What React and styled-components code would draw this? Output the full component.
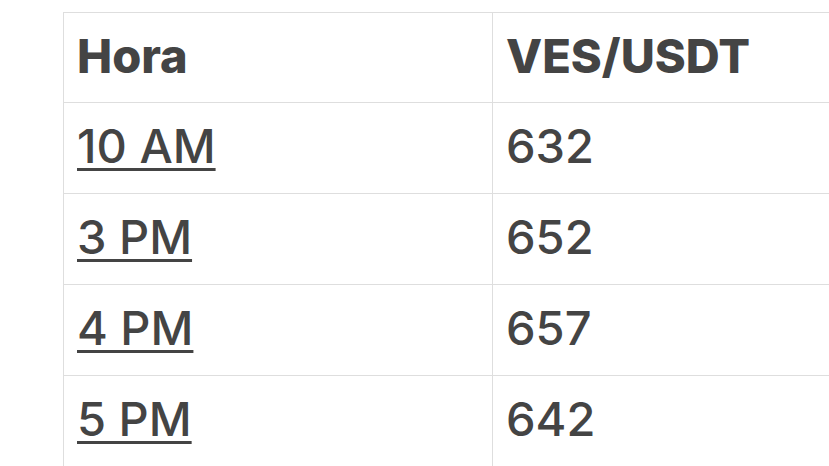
import React from "react";
import styled, { createGlobalStyle } from "styled-components";

const GlobalStyle = createGlobalStyle`
  html, body {
    margin: 0;
    overflow: hidden;
  }
  body {
    background: #fff;
    font-family: Inter, "Noto Sans", sans-serif;
    color: #444;
  }
`;

const Page = styled.div`
  width: 100%;
  overflow: hidden;
  padding: 12px 0 0 63px;
  box-sizing: border-box;
`;

const Table = styled.table`
  border-collapse: collapse;
  width: 900px;
  table-layout: fixed;
`;

const Col = styled.col`
  width: ${(p) => p.$w}px;
`;

const HeadCell = styled.th`
  text-align: left;
  font-weight: 800;
  font-size: 47px;
  height: 84px;
  padding: 0 13px 5px;
  border: 1px solid #dedede;
  color: #444;
  vertical-align: middle;
`;

const Cell = styled.td`
  font-size: 47px;
  font-weight: 500;
  height: 85px;
  padding: 0 13px 5px;
  border: 1px solid #dedede;
  color: #444;
  vertical-align: middle;
`;

const TimeLink = styled.a`
  color: #444;
  text-decoration: underline;
  text-decoration-thickness: 3px;
  text-underline-offset: 5px;
`;

const rows = [
  { time: "10 AM", rate: "632" },
  { time: "3 PM", rate: "652" },
  { time: "4 PM", rate: "657" },
  { time: "5 PM", rate: "642" },
];

export default function App() {
  return (
    <>
      <GlobalStyle />
      <Page>
        <Table>
          <colgroup>
            <Col $w={429} />
            <Col $w={471} />
          </colgroup>
          <thead>
            <tr>
              <HeadCell>Hora</HeadCell>
              <HeadCell>VES/USDT</HeadCell>
            </tr>
          </thead>
          <tbody>
            {rows.map((r) => (
              <tr key={r.time}>
                <Cell>
                  <TimeLink href="#">{r.time}</TimeLink>
                </Cell>
                <Cell>{r.rate}</Cell>
              </tr>
            ))}
          </tbody>
        </Table>
      </Page>
    </>
  );
}
